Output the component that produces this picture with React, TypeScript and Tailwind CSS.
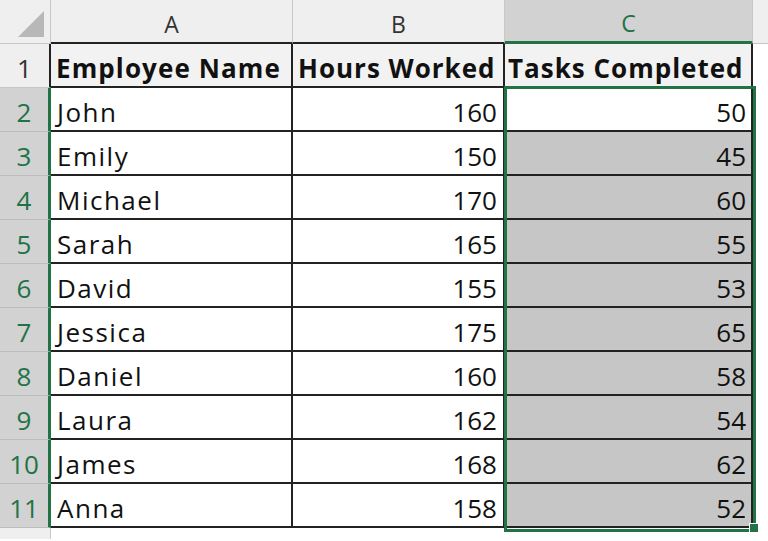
import React from 'react';

const data: [string, number, number][] = [
  ['John', 160, 50],
  ['Emily', 150, 45],
  ['Michael', 170, 60],
  ['Sarah', 165, 55],
  ['David', 155, 53],
  ['Jessica', 175, 65],
  ['Daniel', 160, 58],
  ['Laura', 162, 54],
  ['James', 168, 62],
  ['Anna', 158, 52],
];

const App: React.FC = () => {
  return (
    <div className="relative w-[768px] h-[541px] overflow-hidden bg-white text-[26px] leading-none text-[#111] [font-family:'Open_Sans',Lato,sans-serif]">
      {/* column headers */}
      <div className="flex h-[44px]">
        <div className="w-[51px] bg-[#efefef] border-r border-b border-[#c8c8c8] flex items-end justify-end pr-[6px] pb-[6px]">
          <svg width="26" height="26" viewBox="0 0 26 26">
            <polygon points="26,0 26,26 0,26" fill="#b8b8b8" />
          </svg>
        </div>
        <div className="w-[242px] bg-[#efefef] border-r border-r-[#c8c8c8] border-b-2 border-b-[#222] flex items-center justify-center pt-[6px] text-[23px] text-[#333]">
          A
        </div>
        <div className="w-[212px] bg-[#efefef] border-r border-r-[#c8c8c8] border-b-2 border-b-[#222] flex items-center justify-center pt-[6px] text-[23px] text-[#333]">
          B
        </div>
        <div className="w-[248px] bg-[#d2d2d2] border-r border-r-[#c8c8c8] border-b-[3px] border-b-[#217346] flex items-center justify-center pt-[5px] text-[23px] text-[#217346]">
          C
        </div>
        <div className="flex-1 bg-[#efefef] border-b border-[#c8c8c8]" />
      </div>

      {/* row 1 */}
      <div className="flex h-[44px]">
        <div className="w-[51px] bg-[#efefef] border-r-2 border-r-[#222] border-b border-b-[#c8c8c8] flex items-center justify-center pt-[5px] text-[#333]">
          1
        </div>
        <div className="w-[242px] bg-[#f2f2f2] border-r-2 border-b-2 border-[#222] flex items-center pl-[5px] pt-[5px] font-bold tracking-[1.1px]">
          Employee Name
        </div>
        <div className="w-[212px] bg-[#f2f2f2] border-r-2 border-b-2 border-[#222] flex items-center pl-[5px] pt-[5px] font-bold tracking-[1px]">
          Hours Worked
        </div>
        <div className="w-[248px] bg-[#f2f2f2] border-r-2 border-b-2 border-[#222] flex items-center pl-[3px] pt-[5px] font-bold tracking-[1px]">
          Tasks Completed
        </div>
        <div className="flex-1" />
      </div>

      {/* data rows */}
      {data.map(([name, hours, tasks], i) => (
        <div key={name} className="flex h-[44px]">
          <div className="w-[51px] bg-[#d2d2d2] border-r-[3px] border-r-[#217346] border-b border-b-[#bcbcbc] flex items-center justify-center pt-[5px] text-[#217346]">
            {i + 2}
          </div>
          <div className="w-[242px] border-r-2 border-b-2 border-[#222] flex items-center pl-[6px] pt-[5px] tracking-[1.5px]">
            {name}
          </div>
          <div className="w-[212px] border-r-2 border-b-2 border-[#222] flex items-center justify-end pr-[6px] pt-[5px]">
            {hours}
          </div>
          <div
            className={
              i === 0
                ? 'w-[248px] border-r-2 border-b-2 border-[#222] flex items-center justify-end pr-[5px] pt-[5px]'
                : 'w-[248px] bg-[#c6c6c6] border-r-2 border-b-2 border-[#222] flex items-center justify-end pr-[5px] pt-[5px]'
            }
          >
            {tasks}
          </div>
          <div className="flex-1" />
        </div>
      ))}

      {/* row 12 stub */}
      <div className="flex h-[11px]">
        <div className="w-[51px] bg-[#efefef] border-r border-[#c8c8c8]" />
        <div className="flex-1" />
      </div>

      {/* selection C2:C11 */}
      <div className="absolute left-[504px] top-[86px] w-[252px] h-[446px] border-[3px] border-[#217346]" />
      <div className="absolute left-[749px] top-[523px] w-[10px] h-[10px] bg-[#217346] border border-white" />
    </div>
  );
};

export default App;
